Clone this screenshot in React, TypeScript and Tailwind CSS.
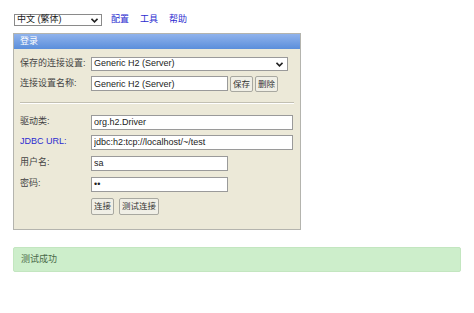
import React from 'react';

const font = { fontFamily: '"Liberation Sans", "Noto Sans CJK SC", sans-serif' };

const inputCls =
  'h-[15px] border border-[#9a9a9a] bg-white px-[2px] text-[9px] leading-[13px] text-[#222] outline-none';

const btnCls =
  'h-[16px] border border-[#a8a8a0] bg-[#f0efe6] px-[2px] text-[8.5px] leading-[14px] text-[#333] rounded-[2px]';

const Row: React.FC<{ label: string; blue?: boolean; children: React.ReactNode; className?: string }> = ({
  label,
  blue,
  children,
  className,
}) => (
  <div className={`flex items-center ${className ?? ''}`}>
    <div className={`w-[71px] shrink-0 text-[9px] ${blue ? 'text-[#2b2bd0]' : 'text-[#444]'}`}>{label}</div>
    <div className="flex items-center gap-[2px]">{children}</div>
  </div>
);

export default function App() {
  return (
    <div className="min-h-[313px] bg-white pl-[13px] pt-[13px]" style={font}>
      <div className="flex items-center">
        <div className="relative ml-[1px] flex h-[12px] w-[88px] items-center border border-[#8a8a8a] bg-white pl-[2px] text-[9px] text-[#222]">
          中文 (繁体)
          <svg className="absolute right-[3px] top-[3px]" width="7" height="5" viewBox="0 0 7 5">
            <path d="M0.5 0.8 L3.5 3.8 L6.5 0.8" fill="none" stroke="#222" strokeWidth="1.6" />
          </svg>
        </div>
        <div className="ml-[9px] flex gap-[11px] text-[9px] text-[#2b2bd0]">
          <span>配置</span>
          <span>工具</span>
          <span>帮助</span>
        </div>
      </div>

      <div className="mt-[6px] w-[288px] border border-[#b4b4ae] bg-[#ece9d8]">
        <div className="h-[15px] bg-gradient-to-b from-[#90b3ec] to-[#5b8edb] pl-[6px] text-[9px] leading-[15px] text-white">
          登录
        </div>
        <div className="px-[6px] pb-[14px] pt-[8px]">
          <Row label="保存的连接设置:">
            <div className="relative flex h-[14px] w-[197px] items-center border border-[#9a9a9a] bg-white pl-[2px] text-[9px] text-[#222]">
              Generic H2 (Server)
              <svg className="absolute right-[4px] top-[4px]" width="7" height="5" viewBox="0 0 7 5">
                <path d="M0.5 0.8 L3.5 3.8 L6.5 0.8" fill="none" stroke="#222" strokeWidth="1.6" />
              </svg>
            </div>
          </Row>
          <Row label="连接设置名称:" className="mt-[5px]">
            <input className={`${inputCls} w-[137px]`} defaultValue="Generic H2 (Server)" />
            <button className={btnCls}>保存</button>
            <button className={btnCls}>删除</button>
          </Row>
          <div className="mt-[10px] mb-[11px] border-t border-[#c2c0b2] border-b-white border-b" />
          <Row label="驱动类:">
            <input className={`${inputCls} w-[202px]`} defaultValue="org.h2.Driver" />
          </Row>
          <Row label="JDBC URL:" blue className="mt-[5px]">
            <input className={`${inputCls} w-[202px]`} defaultValue="jdbc:h2:tcp://localhost/~/test" />
          </Row>
          <Row label="用户名:" className="mt-[6px]">
            <input className={`${inputCls} w-[137px]`} defaultValue="sa" />
          </Row>
          <Row label="密码:" className="mt-[6px]">
            <input className={`${inputCls} w-[137px]`} type="password" defaultValue="sa" />
          </Row>
          <div className="mt-[6px] flex gap-[5px] pl-[71px]">
            <button className={`${btnCls} h-[17px]`}>连接</button>
            <button className={`${btnCls} h-[17px]`}>测试连接</button>
          </div>
        </div>
      </div>

      <div className="mt-[17px] mr-[13px] h-[25px] rounded-[2px] border border-[#c3e6c0] bg-[#cdeecb] pl-[7px] text-[9px] leading-[23px] text-[#4a6a48]">
        测试成功
      </div>
    </div>
  );
}
